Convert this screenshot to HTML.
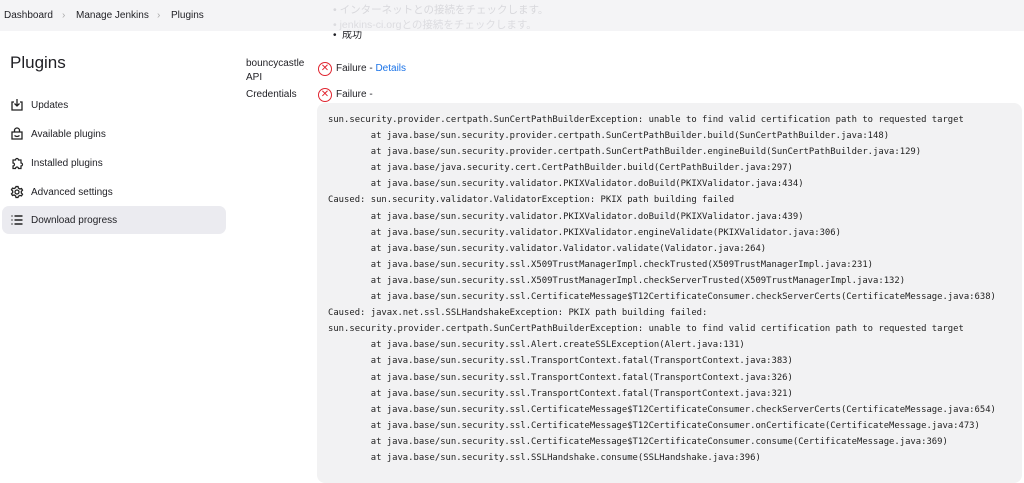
<!DOCTYPE html>
<html><head><meta charset="utf-8"><style>
body{margin:0;width:1024px;height:468px;overflow:hidden;background:#fff;font-family:"Liberation Sans","Noto Sans CJK JP",sans-serif;color:#1f1f24;position:relative}
.hdr{position:absolute;left:0;top:0;width:1024px;height:31px;background:rgba(243,243,246,0.95);z-index:5;font-size:10px}
.hdr span{position:absolute;top:10px}
h1{position:absolute;left:10px;top:53px;margin:0;font-size:17px;font-weight:normal}
.nav{position:absolute;left:2px;width:224px;height:28px;font-size:10px;border-radius:7px}
.nav span{position:absolute;left:29px;top:9px}
.nav svg{position:absolute;left:8px;top:7px}
.sel{background:#ebebf0}
.lbl{position:absolute;font-size:10px;line-height:14px}
.x{position:absolute;width:12px;height:12px;border:1.3px solid #e0242f;border-radius:50%;color:#e0242f;font-size:10px;line-height:12px;text-align:center}
pre{position:absolute;left:317px;top:103px;width:705px;height:380px;margin:0;background:#f2f2f3;border-radius:8px;padding:9px 0 0 11px;box-sizing:border-box;font-family:"DejaVu Sans Mono",monospace;font-size:8.9px;line-height:16.1px;color:#222}
</style></head><body>
<div class="hdr"><span style="left:4px">Dashboard</span><span style="left:62px;color:#aaa">›</span><span style="left:76px">Manage Jenkins</span><span style="left:157px;color:#aaa">›</span><span style="left:171px">Plugins</span>
<span style="left:333px;top:2px;color:#d8d8dc;font-size:10.5px">• インターネットとの接続をチェックします。</span>
<span style="left:333px;top:17px;color:#dcdce0;font-size:10.5px">• jenkins-ci.orgとの接続をチェックします。</span></div>
<div class="lbl" style="left:333px;top:29px;font-size:10px">•&nbsp;&nbsp;成功</div>
<h1>Plugins</h1>
<div class="nav" style="top:91px"><svg width="14" height="14" viewBox="0 0 14 14" fill="none" stroke="#222" stroke-width="1.3"><path d="M4 4H2v8h10V4h-2M7 1v7M4.5 5.5L7 8l2.5-2.5"/></svg><span>Updates</span></div>
<div class="nav" style="top:120px"><svg width="14" height="14" viewBox="0 0 14 14" fill="none" stroke="#222" stroke-width="1.3"><path d="M2 5h10v7H2zM4.5 5V3.5a2.5 2.5 0 0 1 5 0V5M4.5 8.5q2.5 2 5 0"/></svg><span>Available plugins</span></div>
<div class="nav" style="top:149px"><svg width="14" height="14" viewBox="0 0 14 14" fill="none" stroke="#222" stroke-width="1.2"><path d="M3 4h2.5a1.5 1.5 0 1 1 3 0H11v3a1.5 1.5 0 1 1 0 3v2.5H8.5a1.5 1.5 0 1 0-3 0H3V10a1.5 1.5 0 1 0 0-3z"/></svg><span>Installed plugins</span></div>
<div class="nav" style="top:178px"><svg width="14" height="14" viewBox="0 0 14 14" fill="none" stroke="#222" stroke-width="1.3"><circle cx="7" cy="7" r="2"/><path d="M6 1.5h2l.4 1.6 1.5.9 1.6-.5 1 1.7-1.2 1.2v1.6l1.2 1.2-1 1.7-1.6-.5-1.5.9L8 12.5H6l-.4-1.6-1.5-.9-1.6.5-1-1.7 1.2-1.2V6L1.5 4.8l1-1.7 1.6.5 1.5-.9z"/></svg><span>Advanced settings</span></div>
<div class="nav sel" style="top:206px"><svg width="14" height="14" viewBox="0 0 14 14" fill="none" stroke="#222" stroke-width="1.4"><path d="M1.5 3h1M1.5 7h1M1.5 11h1M4.5 3h8M4.5 7h8M4.5 11h8"/></svg><span>Download progress</span></div>
<div class="lbl" style="left:246px;top:57px">bouncycastle<br>API</div>
<div class="lbl" style="left:246px;top:88px">Credentials</div>
<div class="x" style="left:318px;top:62px">✕</div>
<div class="lbl" style="left:336px;top:62px;font-size:10px">Failure - <span style="color:#1a73e8">Details</span></div>
<div class="x" style="left:318px;top:88px">✕</div>
<div class="lbl" style="left:336px;top:88px;font-size:10px">Failure -</div>
<pre>sun.security.provider.certpath.SunCertPathBuilderException: unable to find valid certification path to requested target
        at java.base/sun.security.provider.certpath.SunCertPathBuilder.build(SunCertPathBuilder.java:148)
        at java.base/sun.security.provider.certpath.SunCertPathBuilder.engineBuild(SunCertPathBuilder.java:129)
        at java.base/java.security.cert.CertPathBuilder.build(CertPathBuilder.java:297)
        at java.base/sun.security.validator.PKIXValidator.doBuild(PKIXValidator.java:434)
Caused: sun.security.validator.ValidatorException: PKIX path building failed
        at java.base/sun.security.validator.PKIXValidator.doBuild(PKIXValidator.java:439)
        at java.base/sun.security.validator.PKIXValidator.engineValidate(PKIXValidator.java:306)
        at java.base/sun.security.validator.Validator.validate(Validator.java:264)
        at java.base/sun.security.ssl.X509TrustManagerImpl.checkTrusted(X509TrustManagerImpl.java:231)
        at java.base/sun.security.ssl.X509TrustManagerImpl.checkServerTrusted(X509TrustManagerImpl.java:132)
        at java.base/sun.security.ssl.CertificateMessage$T12CertificateConsumer.checkServerCerts(CertificateMessage.java:638)
Caused: javax.net.ssl.SSLHandshakeException: PKIX path building failed:
sun.security.provider.certpath.SunCertPathBuilderException: unable to find valid certification path to requested target
        at java.base/sun.security.ssl.Alert.createSSLException(Alert.java:131)
        at java.base/sun.security.ssl.TransportContext.fatal(TransportContext.java:383)
        at java.base/sun.security.ssl.TransportContext.fatal(TransportContext.java:326)
        at java.base/sun.security.ssl.TransportContext.fatal(TransportContext.java:321)
        at java.base/sun.security.ssl.CertificateMessage$T12CertificateConsumer.checkServerCerts(CertificateMessage.java:654)
        at java.base/sun.security.ssl.CertificateMessage$T12CertificateConsumer.onCertificate(CertificateMessage.java:473)
        at java.base/sun.security.ssl.CertificateMessage$T12CertificateConsumer.consume(CertificateMessage.java:369)
        at java.base/sun.security.ssl.SSLHandshake.consume(SSLHandshake.java:396)</pre>
</body></html>
